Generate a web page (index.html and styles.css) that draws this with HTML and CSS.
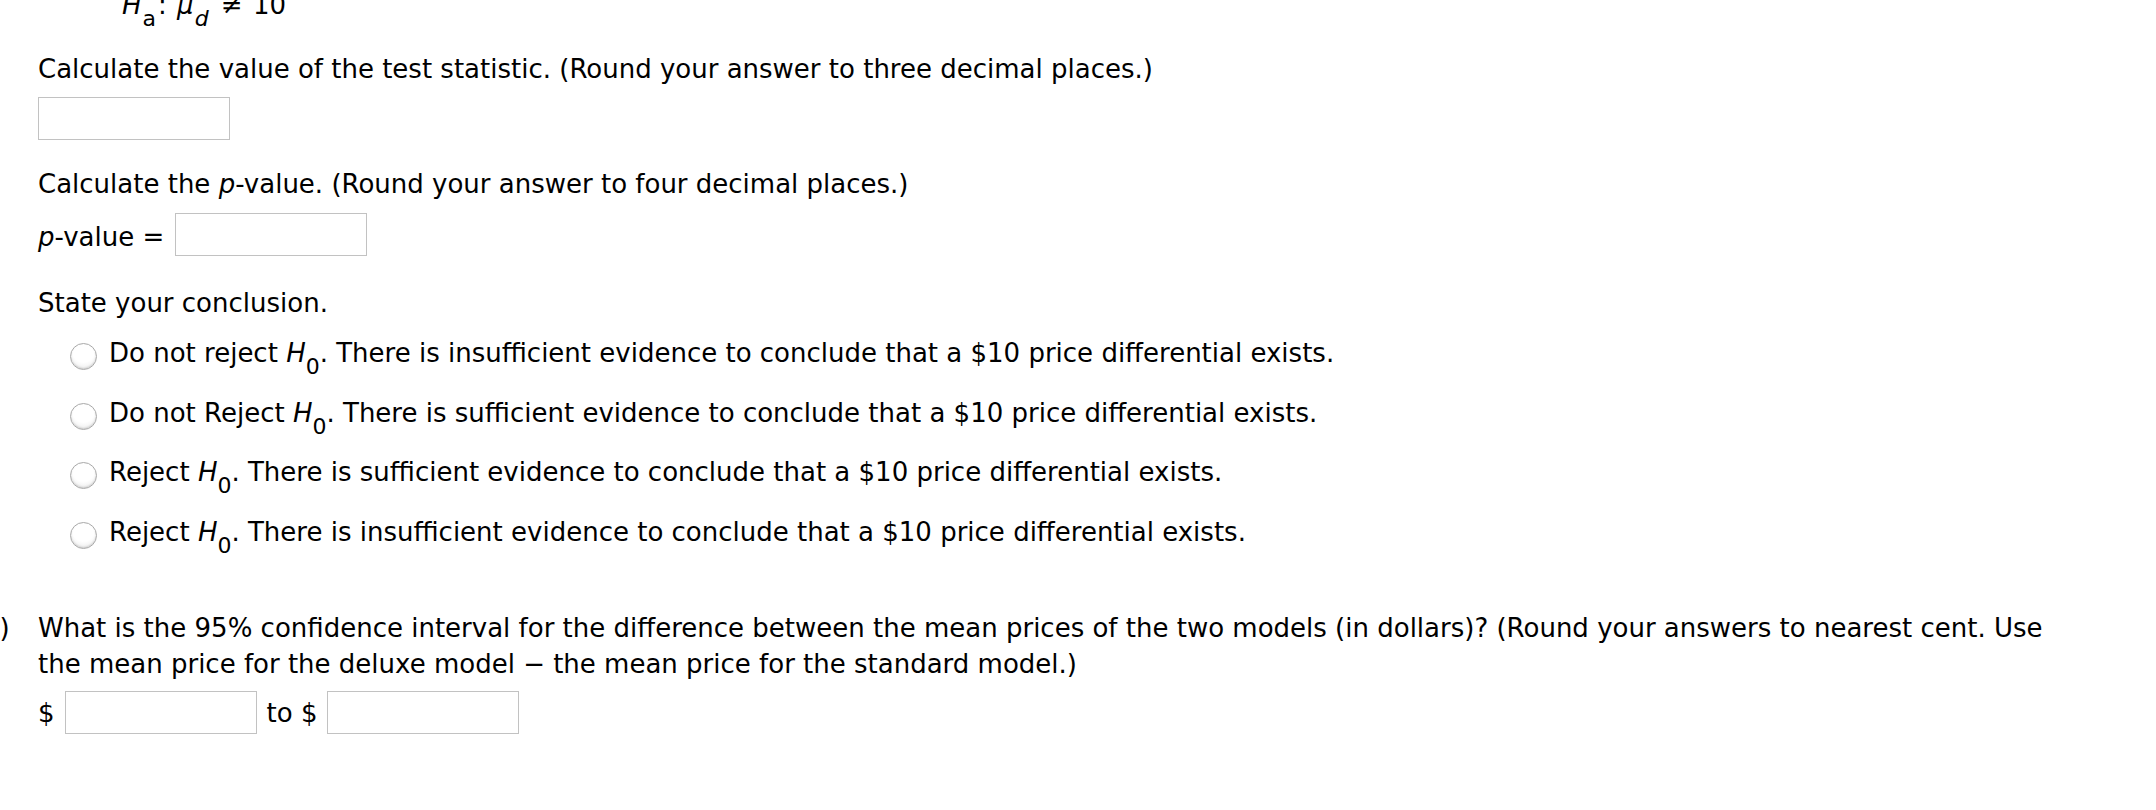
FILE: index.html
```html
<!DOCTYPE html>
<html lang="en">
<head>
<meta charset="utf-8">
<title>Paired difference test</title>
<link rel="stylesheet" href="styles.css">
</head>
<body>
<div class="page">
  <div class="hyp"><i>H</i><sub>a</sub>: <i>μ</i><sub><i>d</i></sub> ≠ 10</div>

  <p class="q q1">Calculate the value of the test statistic. (Round your answer to three decimal places.)</p>
  <div class="field"><input class="box" type="text" aria-label="test statistic"></div>

  <p class="q q2">Calculate the <i>p</i>-value. (Round your answer to four decimal places.)</p>
  <div class="row row-p"><span class="row-text"><i>p</i>-value =</span><input class="box" type="text" aria-label="p-value"></div>

  <p class="q q3">State your conclusion.</p>
  <ul class="choices">
    <li class="choice"><span class="radio"></span><span class="choice-text">Do not reject <i>H</i><sub>0</sub>. There is insufficient evidence to conclude that a $10 price differential exists.</span></li>
    <li class="choice"><span class="radio"></span><span class="choice-text">Do not Reject <i>H</i><sub>0</sub>. There is sufficient evidence to conclude that a $10 price differential exists.</span></li>
    <li class="choice"><span class="radio"></span><span class="choice-text">Reject <i>H</i><sub>0</sub>. There is sufficient evidence to conclude that a $10 price differential exists.</span></li>
    <li class="choice"><span class="radio"></span><span class="choice-text">Reject <i>H</i><sub>0</sub>. There is insufficient evidence to conclude that a $10 price differential exists.</span></li>
  </ul>

  <div class="part">
    <span class="part-label">(c)</span>
    <div class="part-body">
      <p class="q">What is the 95% confidence interval for the difference between the mean prices of the two models (in dollars)? (Round your answers to nearest cent. Use the mean price for the deluxe model − the mean price for the standard model.)</p>
      <div class="row row-ci">
        <span class="row-text">$</span><input class="box" type="text" aria-label="lower bound">
        <span class="row-text">to $</span><input class="box" type="text" aria-label="upper bound">
      </div>
    </div>
  </div>
</div>
</body>
</html>
```

FILE: styles.css
```css
html, body {
  margin: 0;
  padding: 0;
  background: #ffffff;
}

body {
  font-family: "DejaVu Sans", Verdana, sans-serif;
  font-size: 26px;
  line-height: 36px;
  color: #000000;
  overflow: hidden;
}

.page {
  padding: 0 86px 0 38px;
}

.q {
  margin: 0;
}

sub {
  font-size: 22px;
  line-height: 0;
  vertical-align: -12px;
}

.hyp {
  margin-top: -13px;
  padding-left: 84px;
  word-spacing: 2px;
}

.hyp sub {
  margin-left: 1px;
  margin-right: 2px;
}

.q1 {
  margin-top: 28px;
}

.field {
  margin-top: 10px;
  display: flex;
}

.box {
  display: block;
  width: 192px;
  height: 43px;
  box-sizing: border-box;
  margin: 0;
  padding: 0 6px;
  border: 1px solid #c2c2c2;
  background: #ffffff;
  font: inherit;
  outline: none;
}

.q2 {
  margin-top: 26px;
}

.row {
  display: flex;
  align-items: flex-start;
}

.row-p {
  margin-top: 11px;
  gap: 11px;
}

.row-p .row-text {
  padding-top: 6px;
}

.q3 {
  margin-top: 29px;
}

.choices {
  list-style: none;
  margin: 14px 0 0;
  padding: 0 0 0 32px;
  display: flex;
  flex-direction: column;
  gap: 23.6px;
}

.choice {
  display: flex;
  align-items: flex-start;
  gap: 12px;
}

.radio {
  flex: none;
  margin-top: 8px;
  width: 27px;
  height: 27px;
  box-sizing: border-box;
  border-radius: 50%;
  border: 1px solid #a9a9a9;
  background: radial-gradient(circle at 50% 30%, #ffffff 0%, #ffffff 50%, #e6e6e6 100%);
  box-shadow: inset 0 -1px 2px rgba(0, 0, 0, 0.15);
}

.choice-text {
  white-space: nowrap;
}

.part {
  display: flex;
  margin-top: 60px;
}

.part-label {
  flex: none;
  width: 63px;
  margin-left: -63px;
}

.part-body {
  flex: 1;
}

.row-ci {
  margin-top: 9px;
  gap: 10px;
}

.row-ci .row-text {
  padding-top: 4px;
}
```
